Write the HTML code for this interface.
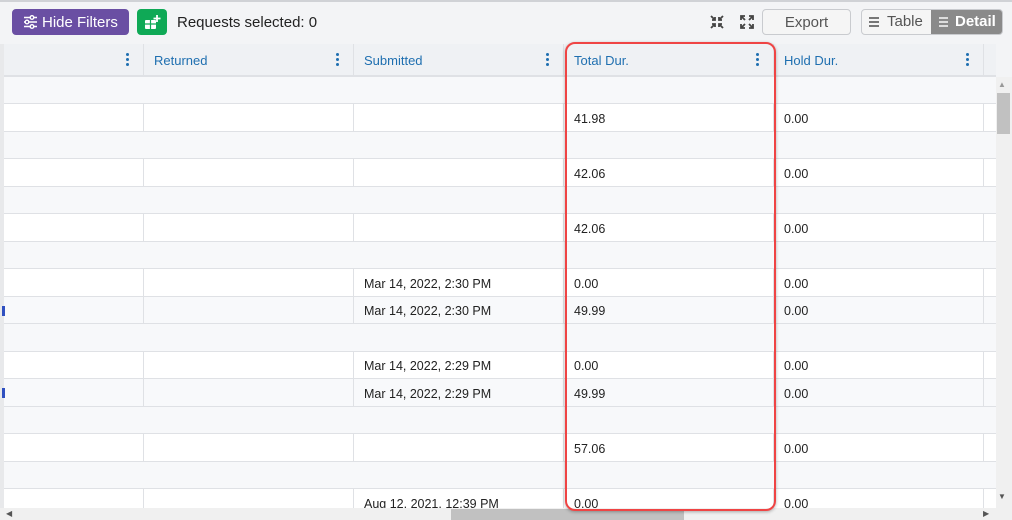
<!DOCTYPE html><html><head><style>
*{margin:0;padding:0;box-sizing:border-box}
body{width:1012px;height:520px;overflow:hidden;background:#f3f4f6;font-family:"Liberation Sans",sans-serif;position:relative}
.a{position:absolute}
.row{position:absolute;left:4px;width:992px;border-bottom:1px solid #dfe1e5}
.cell{position:absolute;top:0;bottom:0;border-right:1px solid #dfe1e5;font-size:12.5px;color:#222;padding-left:10px;padding-top:2px;display:flex;align-items:center}
.hd{color:#1f6fb0;font-size:13px}
.dots{position:absolute;right:14px;top:9px;width:3px}
.dots i{display:block;width:3px;height:3px;background:#1f6fb0;border-radius:50%;margin-bottom:2px}
</style></head><body>
<div class="a" style="left:0;top:0;width:1012px;height:2px;background:#d0d2d6"></div>
<div class="a" style="left:12px;top:9px;width:117px;height:26px;background:#6a4fa3;border-radius:4px;color:#fff;font-size:15px;line-height:27px;padding-left:30px">Hide Filters
<svg class="a" style="left:11px;top:6px" width="15" height="14" viewBox="0 0 15 14" fill="none" stroke="#fff" stroke-width="1.4"><path d="M1 2.5h13M1 7h13M1 11.5h13"/><circle cx="9" cy="2.5" r="1.8" fill="#6a4fa3"/><circle cx="4" cy="7" r="1.8" fill="#6a4fa3"/><circle cx="9" cy="11.5" r="1.8" fill="#6a4fa3"/></svg></div>
<div class="a" style="left:137px;top:9px;width:30px;height:26px;background:#0fa956;border-radius:4px">
<svg class="a" style="left:7px;top:5px" width="17" height="16" viewBox="0 0 17 16" fill="#fff"><rect x="1" y="6" width="11" height="9" rx="1"/><path d="M1 10h11M6.5 6v9" stroke="#0fa956" stroke-width="1.2"/><path d="M13 1v7M9.5 4.5h7" stroke="#fff" stroke-width="1.8"/></svg></div>
<div class="a" style="left:177px;top:14px;font-size:15px;color:#222">Requests selected: 0</div>
<svg class="a" style="left:710px;top:15px" width="14" height="14" viewBox="0 0 14 14" stroke="#444" stroke-width="1.8" fill="none"><path d="M1 1l4 4M13 1l-4 4M1 13l4-4M13 13l-4-4M5 2v3H2M9 2v3h3M5 12V9H2M9 12V9h3"/></svg>
<svg class="a" style="left:740px;top:15px" width="14" height="14" viewBox="0 0 14 14" stroke="#444" stroke-width="1.8" fill="none"><path d="M5 5L1 1M9 5l4-4M5 9l-4 4M9 9l4 4M1 5V1h4M13 5V1H9M1 9v4h4M13 9v4H9"/></svg>
<div class="a" style="left:762px;top:9px;width:89px;height:26px;border:1px solid #c9cbcf;border-radius:4px;background:#f5f5f5;color:#555;font-size:15px;text-align:center;line-height:26px">Export</div>
<div class="a" style="left:861px;top:9px;width:142px;height:26px;border:1px solid #c9cbcf;border-radius:4px;background:#f5f5f5;overflow:hidden">
<div class="a" style="left:0;top:0;width:69px;height:24px;color:#555;font-size:15px;line-height:24px;padding-left:25px">Table</div>
<div class="a" style="left:7px;top:7px;width:10px;height:10px;border-top:2px solid #777;border-bottom:2px solid #777"></div><div class="a" style="left:7px;top:11px;width:10px;height:2px;background:#777"></div>
<div class="a" style="left:69px;top:0;width:72px;height:24px;background:#8a8a8a;color:#fff;font-weight:bold;font-size:15px;line-height:24px;padding-left:24px">Detail</div>
<div class="a" style="left:77px;top:7px;width:9px;height:10px;border-top:2px solid #ddd;border-bottom:2px solid #ddd"></div><div class="a" style="left:77px;top:11px;width:9px;height:2px;background:#ddd"></div>
</div>
<div class="a" style="left:0;top:44px;width:4px;height:464px;background:#e8e9eb"></div>
<div class="row" style="top:44px;height:33px;background:#eff1f4;border-bottom:2px solid #dfe1e5">
<div class="cell" style="left:0;width:140px"><span class="dots"><i></i><i></i><i></i></span></div>
<div class="cell hd" style="left:140px;width:210px">Returned<span class="dots"><i></i><i></i><i></i></span></div>
<div class="cell hd" style="left:350px;width:210px">Submitted<span class="dots"><i></i><i></i><i></i></span></div>
<div class="cell hd" style="left:560px;width:210px">Total Dur.<span class="dots"><i></i><i></i><i></i></span></div>
<div class="cell hd" style="left:770px;width:210px">Hold Dur.<span class="dots"><i></i><i></i><i></i></span></div>
</div>
<div id="rows"></div>
<script>
var data=[[77,0],[104,1,"","41.98"],[132,0],[159,1,"","42.06"],[187,0],[214,1,"","42.06"],[242,0],[269,1,"Mar 14, 2022, 2:30 PM","0.00"],[297,2,"Mar 14, 2022, 2:30 PM","49.99"],[324,0],[352,1,"Mar 14, 2022, 2:29 PM","0.00"],[379,2,"Mar 14, 2022, 2:29 PM","49.99"],[407,0],[434,1,"","57.06"],[462,0],[489,1,"Aug 12, 2021, 12:39 PM","0.00"]];
var h="";data.forEach(function(d,i){var top=d[0],nx=(data[i+1]?data[i+1][0]:517);
if(d[1]==0){h+='<div class="row" style="top:'+top+'px;height:'+(nx-top)+'px;background:#f7f8fa"></div>';}
else{var bg=d[1]==2?'#f8f9fb':'#fff';h+='<div class="row" style="top:'+top+'px;height:'+(nx-top)+'px;background:'+bg+'">'+
(d[1]==2?'<div class="a" style="left:-2px;top:9px;width:3px;height:10px;background:#3050c0"></div>':'')+
'<div class="cell" style="left:0;width:140px"></div><div class="cell" style="left:140px;width:210px"></div><div class="cell" style="left:350px;width:210px">'+d[2]+'</div><div class="cell" style="left:560px;width:210px">'+d[3]+'</div><div class="cell" style="left:770px;width:210px">0.00</div></div>';}});
document.getElementById("rows").innerHTML=h;
</script>
<div class="a" style="left:996px;top:77px;width:16px;height:431px;background:#f0f0f0"></div>
<div class="a" style="left:998px;top:80px;font-size:8px;color:#999">▲</div>
<div class="a" style="left:997px;top:93px;width:13px;height:41px;background:#c1c1c1"></div>
<div class="a" style="left:998px;top:492px;font-size:8px;color:#555">▼</div>
<div class="a" style="left:0;top:508px;width:1012px;height:12px;background:#f0f0f0"></div>
<div class="a" style="left:451px;top:509px;width:233px;height:11px;background:#c1c1c1"></div>
<div class="a" style="left:6px;top:509px;font-size:8px;color:#555">◀</div>
<div class="a" style="left:983px;top:509px;font-size:8px;color:#555">▶</div>
<div class="a" style="left:565px;top:42px;width:211px;height:469px;border:2.5px solid #ef4444;border-radius:10px;box-shadow:0 1px 3px rgba(0,0,0,.3)"></div>
</body></html>
